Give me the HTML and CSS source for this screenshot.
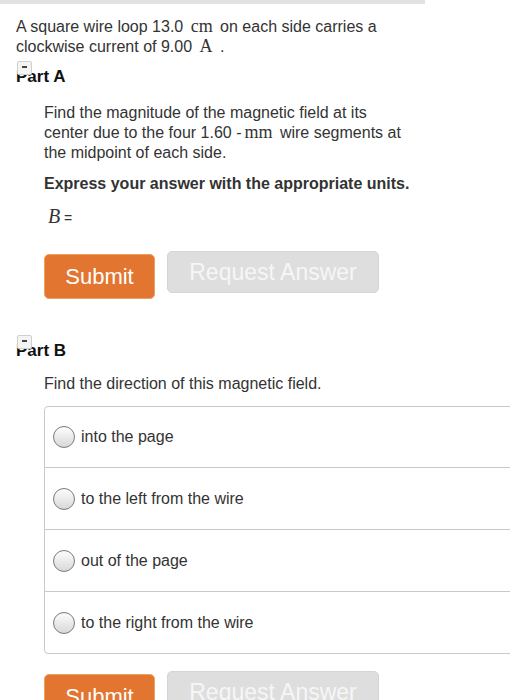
FILE: index.html
```html
<!DOCTYPE html>
<html>
<head>
<meta charset="utf-8">
<link rel="stylesheet" href="styles.css">
</head>
<body>
<div class="topbar"></div>
<p class="intro">A square wire loop 13.0 <span class="math">cm</span> on each side carries a clockwise current of 9.00 <span class="math">A</span> .</p>

<section class="part">
  <div class="part-head"><span class="toggle"></span><h2>Part A</h2></div>
  <div class="part-body">
    <p class="q">Find the magnitude of the magnetic field at its center due to the four 1.60 -<span class="math">mm</span> wire segments at the midpoint of each side.</p>
    <p class="instr">Express your answer with the appropriate units.</p>
    <p class="answer"><span class="var">B</span> =</p>
    <div class="actions">
      <button class="btn submit">Submit</button>
      <button class="btn request">Request Answer</button>
    </div>
  </div>
</section>

<section class="part partb">
  <div class="part-head"><span class="toggle"></span><h2>Part B</h2></div>
  <div class="part-body">
    <p class="q">Find the direction of this magnetic field.</p>
    <ul class="options">
      <li><span class="radio"></span>into the page</li>
      <li><span class="radio"></span>to the left from the wire</li>
      <li><span class="radio"></span>out of the page</li>
      <li><span class="radio"></span>to the right from the wire</li>
    </ul>
    <div class="actions">
      <button class="btn submit">Submit</button>
      <button class="btn request">Request Answer</button>
    </div>
  </div>
</section>
</body>
</html>
```
FILE: styles.css
```css
html, body {
  margin: 0;
  padding: 0;
  background: #fff;
  overflow: hidden;
}
body {
  font-family: "Liberation Sans", Arial, Helvetica, sans-serif;
  color: #333;
  font-size: 16px;
  line-height: 20px;
  width: 510px;
  height: 700px;
}
.topbar {
  width: 425px;
  height: 4px;
  background: #e2e2e2;
}
.intro {
  margin: 13px 16px 0;
  width: 390px;
}
.math {
  font-family: "Liberation Serif", "Times New Roman", serif;
  font-size: 18px;
  line-height: 1;
  margin: 0 3px;
}
.var {
  font-family: "Liberation Serif", "Times New Roman", serif;
  font-style: italic;
  font-size: 20px;
  line-height: 1;
}
.part-head {
  position: relative;
  margin: 4px 16px 0;
  padding-top: 6px;
}
.toggle {
  position: absolute;
  left: 1px;
  top: 0;
  width: 15px;
  height: 14px;
  border: 1px solid #cfcfcf;
  border-radius: 2px;
  background: #f4f4f4;
  box-sizing: border-box;
}
.toggle::after {
  content: "";
  position: absolute;
  left: 4px;
  top: 4px;
  width: 5px;
  height: 2px;
  background: #444;
}
.part-head h2 {
  margin: 0;
  font-size: 17px;
  font-weight: bold;
  color: #111;
  line-height: 20px;
}
.part-body {
  padding: 0 0 0 44px;
}
.q {
  margin: 16px 0 0;
  width: 362px;
}
.instr {
  margin: 11px 0 0;
  font-weight: bold;
}
.answer {
  margin: 12px 0 0 4px;
  font-size: 14px;
}
.actions {
  display: flex;
  align-items: flex-start;
  gap: 12px;
  margin-top: 23px;
}
.btn {
  font-family: "Liberation Sans", Arial, Helvetica, sans-serif;
  font-size: 22px;
  border-radius: 5px;
  padding: 0;
  cursor: pointer;
}
.submit {
  background: #e2752f;
  border: 1px solid #f0a05e;
  color: #fff;
  width: 111px;
  height: 45px;
  margin-top: 3px;
}
.request {
  background: #dedede;
  border: 1px solid #d5d5d5;
  color: #f6f6f6;
  width: 212px;
  height: 42px;
  font-size: 23px;
}
.partb .part-head {
  margin-top: 36px;
}
.partb .q {
  margin-top: 13px;
}
.options {
  list-style: none;
  margin: 12px -20px 0 0;
  padding: 0;
  border: 1px solid #c9c9c9;
  border-radius: 4px;
}
.options li {
  display: flex;
  align-items: center;
  height: 61px;
  padding-left: 8px;
  border-top: 1px solid #c9c9c9;
}
.options li:first-child {
  height: 60px;
  border-top: none;
}
.radio {
  width: 20px;
  height: 20px;
  border: 1px solid #7a7a7a;
  border-radius: 50%;
  background: linear-gradient(#fdfdfd, #d8d8d8);
  margin-right: 6px;
  flex: none;
}
.partb .actions {
  margin-top: 17px;
}
```
